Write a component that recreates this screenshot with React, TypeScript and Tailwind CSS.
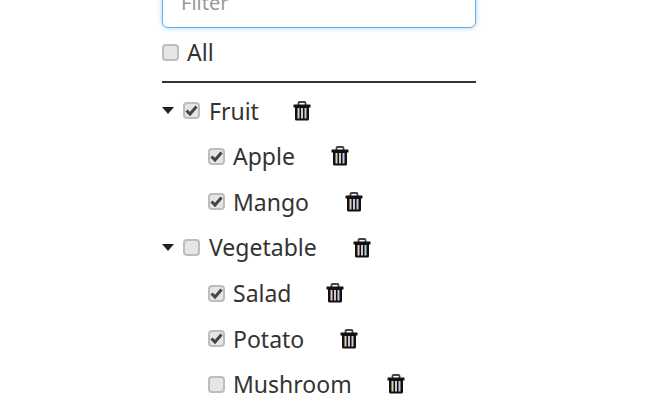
const font = "font-['Noto_Sans','Open_Sans',sans-serif]";

function Check({ checked }: { checked?: boolean }) {
  return (
    <span className="flex h-[17px] w-[17px] shrink-0 items-center justify-center rounded-[4px] border-2 border-[#bdbdbd] bg-[#e6e6e6]">
      {checked && (
        <svg width="13" height="13" viewBox="0 0 13 13">
          <path d="M1.5 6.5 L5 10 L11.5 2.5" fill="none" stroke="#444" strokeWidth="3" />
        </svg>
      )}
    </span>
  );
}

function Trash() {
  return (
    <svg width="18" height="20" viewBox="0 0 18 20" className="shrink-0">
      <path d="M5.5 4 V2 Q5.5 1 6.5 1 H11.5 Q12.5 1 12.5 2 V4" fill="none" stroke="#444" strokeWidth="1.8" />
      <rect x="0.5" y="3.5" width="17" height="3" rx="0.5" fill="#111" />
      <path d="M2 6 H16 V18 Q16 19.5 14.5 19.5 H3.5 Q2 19.5 2 18 Z" fill="#111" />
      <rect x="4.5" y="7" width="2" height="10.5" fill="#e3cdb8" />
      <rect x="8" y="7" width="2" height="10.5" fill="#cfc6d8" />
      <rect x="11.5" y="7" width="2" height="10.5" fill="#bccde0" />
    </svg>
  );
}

const tree = [
  { name: "Fruit", checked: true, gap: "ml-[34px]", items: [
    { name: "Apple", checked: true, gap: "ml-[36px]" },
    { name: "Mango", checked: true, gap: "ml-[36px]" },
  ] },
  { name: "Vegetable", checked: false, gap: "ml-[36px]", items: [
    { name: "Salad", checked: true, gap: "ml-[34px]" },
    { name: "Potato", checked: true, gap: "ml-[36px]" },
    { name: "Mushroom", checked: false, gap: "ml-[35px]" },
  ] },
];

export default function App() {
  return (
    <div className={`h-[400px] w-[650px] overflow-hidden bg-white pl-[162px] text-[#333] ${font}`}>
      <div className="w-[314px]">
        <div className="-mt-[22px] flex h-[50px] items-center rounded-[6px] border border-[#66afe9] pl-[18px] text-[20px] text-[#999] shadow-[0_0_5px_rgba(102,175,233,0.6)]">
          Filter
        </div>
        <div className="mt-[9px] flex h-[30px] items-center">
          <Check />
          <span className="ml-[8px] text-[23px]">All</span>
        </div>
        <div className="mt-[14px] h-[2px] bg-[#333]" />
        <div className="mt-[5px]">
          {tree.map((group) => (
            <div key={group.name}>
              <div className="flex h-[45.6px] items-center">
                <span className="h-0 w-0 border-x-[6.5px] border-t-[7px] border-x-transparent border-t-[#222]" />
                <span className="ml-[9px]"><Check checked={group.checked} /></span>
                <span className="ml-[9px] text-[23px]">{group.name}</span>
                <span className={group.gap}><Trash /></span>
              </div>
              {group.items.map((item) => (
                <div key={item.name} className="flex h-[45.6px] items-center pl-[46px]">
                  <Check checked={item.checked} />
                  <span className="ml-[8px] text-[23px]">{item.name}</span>
                  <span className={item.gap}><Trash /></span>
                </div>
              ))}
            </div>
          ))}
        </div>
      </div>
    </div>
  );
}
